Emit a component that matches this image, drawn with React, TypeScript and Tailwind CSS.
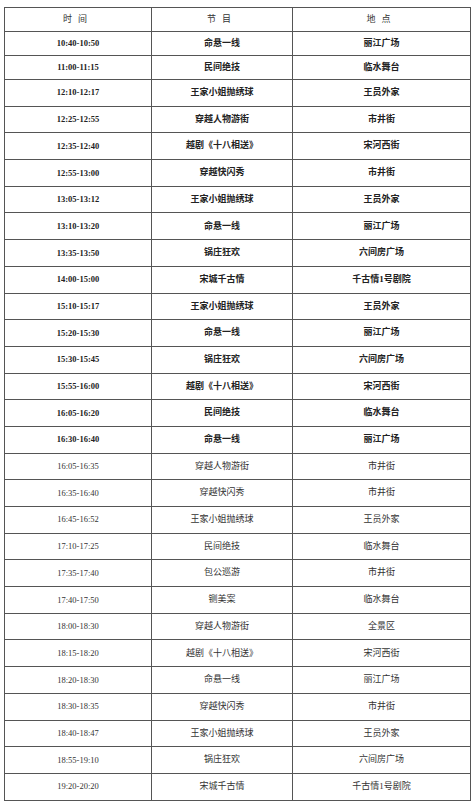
type Show = {
  time: string;
  name: string;
  place: string;
  bold?: boolean;
};

const SHOWS: Show[] = [
  { time: '10:40-10:50', name: '命悬一线', place: '丽江广场', bold: true },
  { time: '11:00-11:15', name: '民间绝技', place: '临水舞台', bold: true },
  { time: '12:10-12:17', name: '王家小姐抛绣球', place: '王员外家', bold: true },
  { time: '12:25-12:55', name: '穿越人物游街', place: '市井街', bold: true },
  { time: '12:35-12:40', name: '越剧《十八相送》', place: '宋河西街', bold: true },
  { time: '12:55-13:00', name: '穿越快闪秀', place: '市井街', bold: true },
  { time: '13:05-13:12', name: '王家小姐抛绣球', place: '王员外家', bold: true },
  { time: '13:10-13:20', name: '命悬一线', place: '丽江广场', bold: true },
  { time: '13:35-13:50', name: '锅庄狂欢', place: '六间房广场', bold: true },
  { time: '14:00-15:00', name: '宋城千古情', place: '千古情1号剧院', bold: true },
  { time: '15:10-15:17', name: '王家小姐抛绣球', place: '王员外家', bold: true },
  { time: '15:20-15:30', name: '命悬一线', place: '丽江广场', bold: true },
  { time: '15:30-15:45', name: '锅庄狂欢', place: '六间房广场', bold: true },
  { time: '15:55-16:00', name: '越剧《十八相送》', place: '宋河西街', bold: true },
  { time: '16:05-16:20', name: '民间绝技', place: '临水舞台', bold: true },
  { time: '16:30-16:40', name: '命悬一线', place: '丽江广场', bold: true },
  { time: '16:05-16:35', name: '穿越人物游街', place: '市井街' },
  { time: '16:35-16:40', name: '穿越快闪秀', place: '市井街' },
  { time: '16:45-16:52', name: '王家小姐抛绣球', place: '王员外家' },
  { time: '17:10-17:25', name: '民间绝技', place: '临水舞台' },
  { time: '17:35-17:40', name: '包公巡游', place: '市井街' },
  { time: '17:40-17:50', name: '铡美案', place: '临水舞台' },
  { time: '18:00-18:30', name: '穿越人物游街', place: '全景区' },
  { time: '18:15-18:20', name: '越剧《十八相送》', place: '宋河西街' },
  { time: '18:20-18:30', name: '命悬一线', place: '丽江广场' },
  { time: '18:30-18:35', name: '穿越快闪秀', place: '市井街' },
  { time: '18:40-18:47', name: '王家小姐抛绣球', place: '王员外家' },
  { time: '18:55-19:10', name: '锅庄狂欢', place: '六间房广场' },
  { time: '19:20-20:20', name: '宋城千古情', place: '千古情1号剧院' },
];

const cell = 'border border-[#555] text-center align-middle p-0';

export default function App() {
  return (
    <div className="min-h-[810px] w-[474px] bg-white pl-[4px] pt-[7px] font-['Liberation_Serif','Noto_Sans_CJK_SC',serif]">
      <table className="w-[466px] table-fixed border-collapse">
        <colgroup>
          <col className="w-[147px]" />
          <col className="w-[141px]" />
          <col className="w-[178px]" />
        </colgroup>
        <thead>
          <tr className="h-[24px] text-[9px] text-[#333]">
            <th className={`${cell} font-normal`}>
              <span className="tracking-[6px]">时间</span>
            </th>
            <th className={`${cell} font-normal`}>
              <span className="tracking-[6px]">节目</span>
            </th>
            <th className={`${cell} font-normal`}>
              <span className="tracking-[6px]">地点</span>
            </th>
          </tr>
        </thead>
        <tbody>
          {SHOWS.map((s, i) => (
            <tr
              key={i}
              className={`${i < 2 ? 'h-[24px]' : 'h-[26.7px]'} ${
                s.bold ? 'font-semibold text-[#222]' : 'font-normal text-[#333]'
              }`}
            >
              <td className={`${cell} text-[8.5px]`}>{s.time}</td>
              <td className={`${cell} text-[9px]`}>{s.name}</td>
              <td className={`${cell} text-[9px]`}>{s.place}</td>
            </tr>
          ))}
        </tbody>
      </table>
    </div>
  );
}
